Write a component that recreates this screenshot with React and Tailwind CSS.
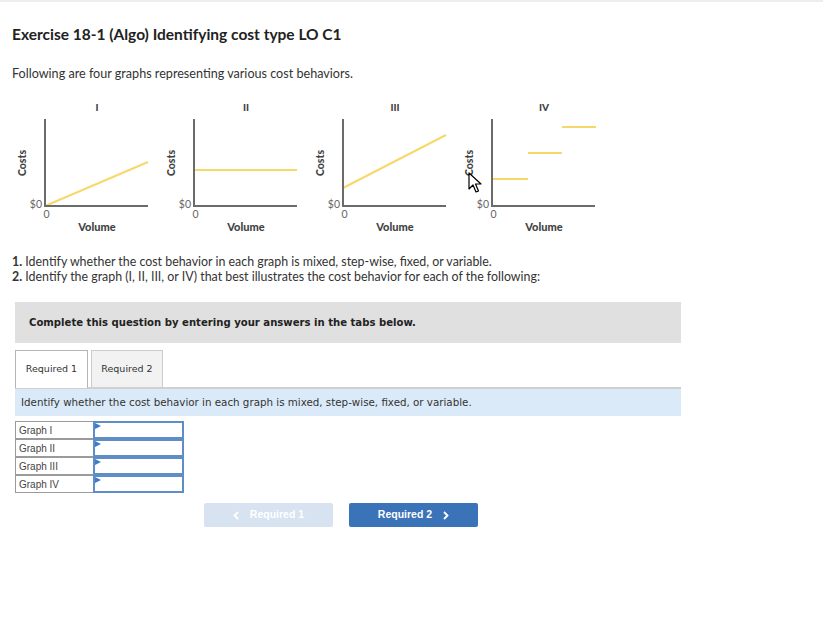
import React from "react";

const AX = "#6b6b6b";
const YL = "#f7d86b";

function Graph({ title, children }) {
  return (
    <svg width="149" height="145" viewBox="0 0 149 145" className="block shrink-0">
      <text x="97" y="16" textAnchor="middle" fontFamily="Lato, 'Liberation Sans', sans-serif" fontWeight="900" fontSize="10" fill="#444">{title}</text>
      <text x="0" y="0" transform="translate(26 68) rotate(-90)" textAnchor="middle" fontFamily="Lato, 'Liberation Sans', sans-serif" fontWeight="900" fontSize="10.5" fill="#444">Costs</text>
      <text x="42" y="113" textAnchor="end" fontFamily="Lato, 'Liberation Sans', sans-serif" fontSize="10.5" fill="#666">$0</text>
      <text x="46.5" y="123" textAnchor="middle" fontFamily="Lato, 'Liberation Sans', sans-serif" fontSize="10.5" fill="#666">0</text>
      <text x="97" y="136" textAnchor="middle" fontFamily="Lato, 'Liberation Sans', sans-serif" fontWeight="900" fontSize="11" fill="#444">Volume</text>
      {children}
      <line x1="45" y1="24" x2="45" y2="112" stroke={AX} strokeWidth="2" />
      <line x1="44" y1="111" x2="148" y2="111" stroke={AX} strokeWidth="2" />
    </svg>
  );
}

export default function App() {
  const rows = ["Graph I", "Graph II", "Graph III", "Graph IV"];
  return (
    <div className="w-[823px] h-[630px] bg-white relative overflow-hidden font-['Lato',sans-serif]">
      <div className="h-[2px] bg-[#eeeeee]" />
      <div className="px-[12px]">
        <h1 className="mt-[22px] text-[15.5px] leading-[20px] font-bold text-[#222]">Exercise 18-1 (Algo) Identifying cost type LO C1</h1>
        <p className="mt-[22px] text-[12.6px] leading-[16px] text-[#333]">Following are four graphs representing various cost behaviors.</p>
      </div>
      <div className="mt-[13px] flex">
        <Graph title="I">
          <line x1="45" y1="111" x2="148" y2="67" stroke={YL} strokeWidth="2" />
        </Graph>
        <Graph title="II">
          <line x1="45" y1="75" x2="148" y2="75" stroke={YL} strokeWidth="2" />
        </Graph>
        <Graph title="III">
          <line x1="45" y1="93" x2="148" y2="40" stroke={YL} strokeWidth="2" />
        </Graph>
        <Graph title="IV">
          <line x1="46" y1="84" x2="81" y2="84" stroke={YL} strokeWidth="2" />
          <line x1="81" y1="58" x2="115" y2="58" stroke={YL} strokeWidth="2" />
          <line x1="115" y1="32" x2="150" y2="32" stroke={YL} strokeWidth="2" />
        </Graph>
      </div>
      <div className="px-[12px] mt-[14px] text-[12.4px] leading-[15px] text-[#333]">
        <p><span className="font-bold">1.</span> Identify whether the cost behavior in each graph is mixed, step-wise, fixed, or variable.</p>
        <p><span className="font-bold">2.</span> Identify the graph (I, II, III, or IV) that best illustrates the cost behavior for each of the following:</p>
      </div>
      <div className="ml-[15px] w-[666px] font-['DejaVu_Sans',Verdana,sans-serif]">
        <div className="mt-[18px] h-[41px] bg-[#e0e0e0] flex items-center pl-[14px] text-[10.1px] font-bold text-[#222] font-['DejaVu_Sans',Verdana,sans-serif]">
          Complete this question by entering your answers in the tabs below.
        </div>
        <div className="mt-[6px] flex gap-[3px] h-[38px] items-end">
          <div className="h-[38px] w-[73px] bg-white border border-b-0 border-[#b5b5b5] flex items-center justify-center text-[9.5px] text-[#333] relative top-[1px] font-['DejaVu_Sans',Verdana,sans-serif]">Required 1</div>
          <div className="h-[37px] w-[72px] bg-[#f2f2f2] border border-b-0 border-[#cccccc] flex items-center justify-center text-[9.5px] text-[#333] font-['DejaVu_Sans',Verdana,sans-serif]">Required 2</div>
        </div>
        <div className="h-[29px] bg-[#dbeaf8] border-t-2 border-[#cfcfcf] flex items-center pl-[6px] text-[10.3px] text-[#333] font-['DejaVu_Sans',Verdana,sans-serif]">
          Identify whether the cost behavior in each graph is mixed, step-wise, fixed, or variable.
        </div>
      </div>
      <div className="ml-[15px] mt-[5px] w-[170px] font-['Liberation_Sans',Arial,sans-serif]">
        {rows.map((r) => (
          <div key={r} className="flex h-[18px]">
            <div className="w-[79px] border border-[#9a9a9a] flex items-center pl-[3px] text-[10px] text-[#444]">{r}</div>
            <div className="relative w-[91px] border-2 border-[#5f8ec7] bg-white -ml-px">
              <svg width="6" height="7" viewBox="0 0 6 7" className="absolute left-0 top-0">
                <polygon points="0,0 6,3 0,6" fill="#3d7cc9" />
              </svg>
            </div>
          </div>
        ))}
      </div>
      <div className="mt-[10px] flex gap-[16px] pl-[204px] font-['Liberation_Sans',Arial,sans-serif]">
        <div className="w-[129px] h-[24px] bg-[#d7e3f1] rounded-[2px] flex items-center justify-center gap-[11px] text-white text-[10.5px] font-bold">
          <svg width="6" height="9" viewBox="0 0 6 9"><path d="M5 1 L1.5 4.5 L5 8" fill="none" stroke="white" strokeWidth="1.8" /></svg>
          <span>Required 1</span>
        </div>
        <div className="w-[129px] h-[24px] bg-[#3a73b8] rounded-[2px] flex items-center justify-center gap-[11px] text-white text-[10.5px] font-bold">
          <span>Required 2</span>
          <svg width="6" height="9" viewBox="0 0 6 9"><path d="M1 1 L4.5 4.5 L1 8" fill="none" stroke="white" strokeWidth="1.8" /></svg>
        </div>
      </div>
      <svg width="16" height="22" viewBox="0 0 16 22" className="absolute left-[468px] top-[172px]">
        <path d="M1 1 L1 17 L5 13 L8 20 L10.5 19 L7.5 12 L13 12 Z" fill="white" stroke="black" strokeWidth="1.2" strokeLinejoin="round" />
      </svg>
    </div>
  );
}
